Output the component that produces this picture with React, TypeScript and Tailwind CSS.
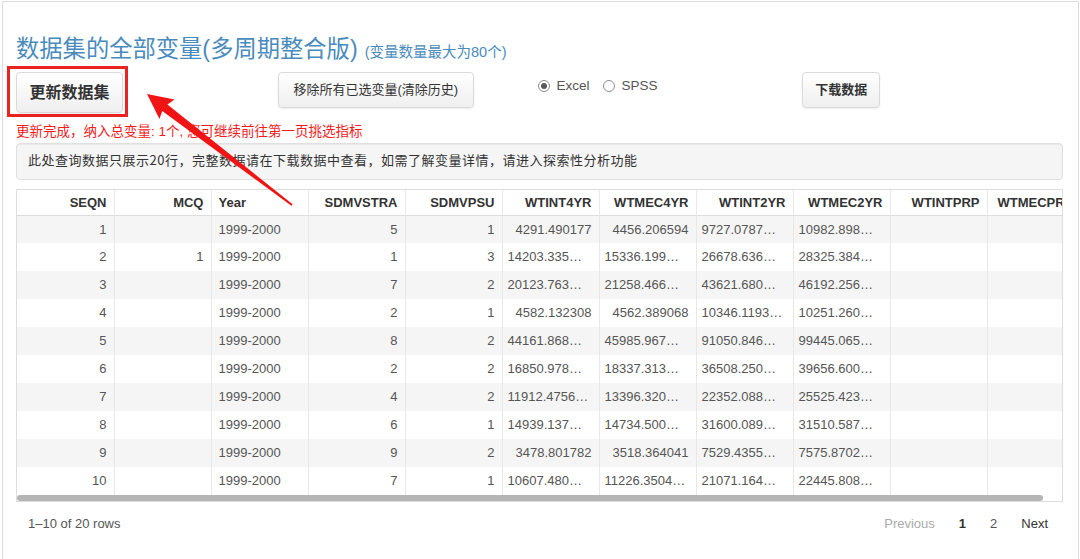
import React from 'react';

const cols = [
  'SEQN', 'MCQ', 'Year', 'SDMVSTRA', 'SDMVPSU', 'WTINT4YR', 'WTMEC4YR',
  'WTINT2YR', 'WTMEC2YR', 'WTINTPRP', 'WTMECPRP',
];

const rows: string[][] = [
  ['1', '', '1999-2000', '5', '1', '4291.490177', '4456.206594', '9727.0787…', '10982.898…', '', ''],
  ['2', '1', '1999-2000', '1', '3', '14203.335…', '15336.199…', '26678.636…', '28325.384…', '', ''],
  ['3', '', '1999-2000', '7', '2', '20123.763…', '21258.466…', '43621.680…', '46192.256…', '', ''],
  ['4', '', '1999-2000', '2', '1', '4582.132308', '4562.389068', '10346.1193…', '10251.260…', '', ''],
  ['5', '', '1999-2000', '8', '2', '44161.868…', '45985.967…', '91050.846…', '99445.065…', '', ''],
  ['6', '', '1999-2000', '2', '2', '16850.978…', '18337.313…', '36508.250…', '39656.600…', '', ''],
  ['7', '', '1999-2000', '4', '2', '11912.4756…', '13396.320…', '22352.088…', '25525.423…', '', ''],
  ['8', '', '1999-2000', '6', '1', '14939.137…', '14734.500…', '31600.089…', '31510.587…', '', ''],
  ['9', '', '1999-2000', '9', '2', '3478.801782', '3518.364041', '7529.4355…', '7575.8702…', '', ''],
  ['10', '', '1999-2000', '7', '1', '10607.480…', '11226.3504…', '21071.164…', '22445.808…', '', ''],
];

const btn =
  'rounded-[4px] border border-[#dadada] bg-linear-to-b from-white to-[#efefef] shadow-[0_1px_2px_rgba(0,0,0,0.08)] text-[#333] whitespace-nowrap';

const Radio = ({ checked, label }: { checked?: boolean; label: string }) => (
  <label className="flex items-center mr-[13px]">
    <span className="w-[12px] h-[12px] rounded-full border border-[#8c8c8c] bg-white flex items-center justify-center">
      {checked && <span className="w-[6px] h-[6px] rounded-full bg-[#5a5a5a]" />}
    </span>
    <span className="ml-[7px] text-[13.5px] text-[#555]">{label}</span>
  </label>
);

export default function App() {
  return (
    <div className="relative w-[1080px] h-[559px] overflow-hidden bg-white font-['Liberation_Sans','Noto_Sans_CJK_SC',sans-serif]">
      <div className="ml-[2px] mt-[1px] w-[1077px] h-[600px] border border-[#dcdcdc] pl-[13px] pt-[31px]">
        <div className="w-[1047px]">
          {/* title */}
          <h1 className="h-[30px] leading-[32px] text-[#4a8bbd] whitespace-nowrap">
            <span className="text-[23.3px]">数据集的全部变量(多周期整合版)</span>
            <span className="text-[14.5px] ml-[7px]">(变量数量最大为80个)</span>
          </h1>

          {/* action row */}
          <div className="mt-[9px] grid grid-cols-4 items-start h-[41px]">
            <div>
              <button className={`${btn} h-[41px] w-[107px] text-[16px] font-bold`}>更新数据集</button>
            </div>
            <div>
              <button className={`${btn} h-[36px] w-[196px] text-[13px]`}>移除所有已选变量(清除历史)</button>
            </div>
            <div className="flex items-center mt-[6px] h-[16px] -ml-[2px]">
              <Radio checked label="Excel" />
              <Radio label="SPSS" />
            </div>
            <div>
              <button className={`${btn} ml-[1px] h-[36px] w-[78px] text-[13px] font-bold`}>下载数据</button>
            </div>
          </div>

          <p className="mt-[10px] h-[18px] leading-[18px] text-[13.5px] text-[#f21b1b] whitespace-nowrap">
            更新完成，纳入总变量: 1个, 您可继续前往第一页挑选指标
          </p>

          <div className="mt-[2px] h-[37px] flex items-center pl-[11px] pb-[3px] rounded-[4px] border border-[#e0e0e0] bg-[#f5f5f5] shadow-[inset_0_1px_1px_rgba(0,0,0,0.05)] text-[13px] tracking-[0.5px] text-[#333] font-['Noto_Sans_CJK_SC',sans-serif] whitespace-nowrap">
            此处查询数据只展示20行，完整数据请在下载数据中查看，如需了解变量详情，请进入探索性分析功能
          </div>

          {/* table */}
          <div className="mt-[9px] border border-[#dddddd] overflow-hidden">
            <table className="table-fixed border-collapse w-[1067px] text-[13px]">
              <thead>
                <tr className="h-[25px] border-b border-[#dddddd]">
                  {cols.map((c) => (
                    <th
                      key={c}
                      className={`w-[97px] font-bold text-[#333] whitespace-nowrap overflow-hidden border-r border-[#e8e8e8] ${
                        c === 'Year' ? 'text-left px-[7px]' : c === 'WTMECPRP' ? 'text-left pl-[10px] pr-0' : 'text-right px-[7px]'
                      }`}
                    >
                      {c}
                    </th>
                  ))}
                </tr>
              </thead>
              <tbody>
                {rows.map((r, i) => (
                  <tr key={i} className={`h-[28px] ${i % 2 === 0 ? 'bg-[#f5f5f5]' : 'bg-white'}`}>
                    {cols.map((c, j) => {
                      const v = r[j] ?? '';
                      const cut = v.endsWith('…');
                      return (
                        <td
                          key={c}
                          className={`w-[97px] text-[#555] whitespace-nowrap overflow-hidden border-r border-[#e8e8e8] ${
                            c === 'Year' ? 'text-left px-[7px]' : cut ? 'text-left pl-[5px] pr-0' : 'text-right px-[7px]'
                          }`}
                        >
                          {v}
                        </td>
                      );
                    })}
                  </tr>
                ))}
              </tbody>
            </table>
            <div className="h-[6px]">
              <div className="h-[6px] w-[1026px] rounded-full bg-[#b5b5b5]" />
            </div>
          </div>

          {/* pagination */}
          <div className="mt-[12px] h-[20px] flex items-center justify-between text-[13px]">
            <span className="pl-[12px] text-[#555]">1–10 of 20 rows</span>
            <div className="flex items-center pr-[3px]">
              <span className="px-[12px] text-[#aaa]">Previous</span>
              <span className="px-[12px] text-[#333] font-bold">1</span>
              <span className="px-[12px] text-[#555]">2</span>
              <span className="pl-[12px] pr-[12px] text-[#333]">Next</span>
            </div>
          </div>
        </div>
      </div>

      {/* annotation overlay */}
      <div className="absolute left-[7px] top-[66px] w-[121px] h-[51px] border-[3px] border-[#ea2320] pointer-events-none" />
      <svg className="absolute left-0 top-0 pointer-events-none" width="1080" height="559" viewBox="0 0 1080 559">
        <polygon
          points="147,94 174.5,99.5 167.4,104.4 292.6,204.3 291.4,205.8 162.2,110.9 159.5,119"
          fill="#f01414"
        />
      </svg>
    </div>
  );
}
